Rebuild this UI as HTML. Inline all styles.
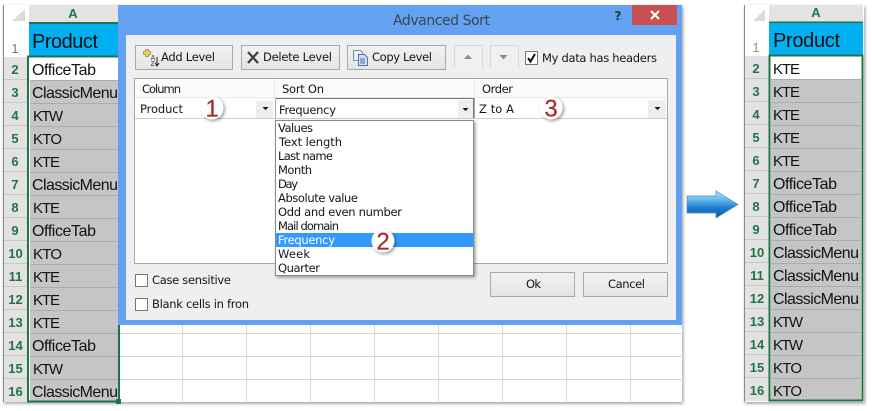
<!DOCTYPE html>
<html><head><meta charset="utf-8"><style>
html,body{margin:0;padding:0;background:#fff;width:872px;height:411px;overflow:hidden}
svg{display:block}
.c{font-family:"Liberation Sans",sans-serif;font-size:16px;fill:#111}
.k{font-size:15px}
.r{font-family:"Liberation Sans",sans-serif;font-size:13px;font-weight:bold;fill:#217346;text-anchor:middle}
.d{font-family:"DejaVu Sans",sans-serif;font-size:11.5px;fill:#14141f}
.n{font-family:"Liberation Sans",sans-serif;font-size:24px;fill:#a52a2a;stroke:#a52a2a;stroke-width:.2;text-anchor:middle}
</style></head><body>
<svg width="872" height="411" viewBox="0 0 872 411" xmlns="http://www.w3.org/2000/svg">
<defs>
<linearGradient id="ar" x1="0" y1="0" x2="0" y2="1"><stop offset="0" stop-color="#a8dcf8"/><stop offset=".3" stop-color="#6fbdee"/><stop offset=".6" stop-color="#1f7fd0"/><stop offset="1" stop-color="#0757a8"/></linearGradient>
<linearGradient id="bt" x1="0" y1="0" x2="0" y2="1"><stop offset="0" stop-color="#f2f2f2"/><stop offset="1" stop-color="#e4e4e4"/></linearGradient>
<filter id="sh" x="-30%" y="-30%" width="160%" height="160%"><feDropShadow dx="1.5" dy="1.5" stdDeviation="1.5" flood-color="#000" flood-opacity=".4"/></filter>
<filter id="sh2" x="-5%" y="-5%" width="110%" height="110%"><feDropShadow dx="1" dy="1.5" stdDeviation="1.5" flood-color="#000" flood-opacity=".4"/></filter>
</defs>

<!-- LEFT SHEET -->
<rect x="3" y="5" width="679" height="397" fill="#fff" filter="url(#sh2)"/>
<rect x="4" y="5" width="24" height="18" fill="#fff"/>
<path d="M25 9V21H12Z" fill="#dcdcdc"/>
<rect x="29" y="5" width="89" height="18" fill="#e4e4e4"/>
<text x="73" y="18" class="r">A</text>
<rect x="29" y="23" width="89" height="33" fill="#00b0f0"/>
<rect x="29" y="22" width="89" height="2" fill="#217346"/>
<rect x="4" y="57" width="24" height="345" fill="#e2e2e2"/>
<rect x="3" y="5" width="1" height="397" fill="#8a8a8a"/>
<rect x="30" y="80" width="88" height="322" fill="#c5c5c5"/>
<rect x="30" y="57" width="88" height="23" fill="#fff"/>
<path d="M30 80.500H118M30 103.500H118M30 126.500H118M30 149.500H118M30 172.500H118M30 195.500H118M30 218.500H118M30 241.500H118M30 264.500H118M30 287.500H118M30 310.500H118M30 333.500H118M30 356.500H118M30 379.500H118" stroke="#acacac" fill="none"/>
<path d="M4 79.500H28M4 102.500H28M4 125.500H28M4 148.500H28M4 171.500H28M4 194.500H28M4 217.500H28M4 240.500H28M4 263.500H28M4 286.500H28M4 309.500H28M4 332.500H28M4 355.500H28M4 378.500H28" stroke="#c8c8c8" fill="none"/>
<path d="M118 333.500H682M118 356.500H682M118 379.500H682M182.500 325V402M246.500 325V402M310.500 325V402M374.500 325V402M438.500 325V402M502.500 325V402M566.500 325V402M630.500 325V402" stroke="#d6d6d6" fill="none"/>
<rect x="28" y="56.500" width="91" height="345" fill="none" stroke="#217346" stroke-width="2"/>
<rect x="116" y="399" width="5" height="5" fill="#217346"/>
<text x="15" y="53" class="r" style="font-weight:normal;fill:#5a8a80">1</text>
<text x="15" y="74" class="r">2</text><text x="15" y="97" class="r">3</text><text x="15" y="120" class="r">4</text><text x="15" y="143" class="r">5</text><text x="15" y="166" class="r">6</text><text x="15" y="189" class="r">7</text><text x="15" y="212" class="r">8</text><text x="15" y="235" class="r">9</text><text x="15.500" y="258" class="r">10</text><text x="15.500" y="281" class="r">11</text><text x="15.500" y="304" class="r">12</text><text x="15.500" y="327" class="r">13</text><text x="15.500" y="350" class="r">14</text><text x="15.500" y="373" class="r">15</text><text x="15.500" y="396" class="r">16</text>
<text x="32" y="48" class="c" style="font-size:20px" textLength="66">Product</text>
<text x="32" y="75" class="c" textLength="64">OfficeTab</text>
<text x="32" y="98" class="c" textLength="86">ClassicMenu</text>
<text x="33" y="121" class="c k" textLength="30">KTW</text>
<text x="33" y="144" class="c k" textLength="29">KTO</text>
<text x="33" y="167" class="c k" textLength="27">KTE</text>
<text x="32" y="190" class="c" textLength="86">ClassicMenu</text>
<text x="33" y="213" class="c k" textLength="27">KTE</text>
<text x="32" y="236" class="c" textLength="64">OfficeTab</text>
<text x="33" y="259" class="c k" textLength="29">KTO</text>
<text x="33" y="282" class="c k" textLength="27">KTE</text>
<text x="33" y="305" class="c k" textLength="27">KTE</text>
<text x="33" y="328" class="c k" textLength="27">KTE</text>
<text x="32" y="351" class="c" textLength="64">OfficeTab</text>
<text x="33" y="374" class="c k" textLength="30">KTW</text>
<text x="32" y="397" class="c" textLength="86">ClassicMenu</text>

<!-- DIALOG -->
<rect x="118" y="5" width="564" height="320" fill="#65a1f2"/>
<rect x="126" y="35" width="550" height="285" fill="#efefef"/>
<rect x="632" y="5" width="45" height="20" fill="#c75050"/>
<path d="M651 11L659 19M659 11L651 19" stroke="#fff" stroke-width="2"/>
<text x="618" y="20" style="font-family:'DejaVu Sans',sans-serif;font-size:12px;font-weight:bold;fill:#333" text-anchor="middle">?</text>
<text x="393" y="25" style="font-family:'DejaVu Sans',sans-serif;font-size:14px;fill:#3c4450" textLength="97">Advanced Sort</text>

<!-- toolbar -->
<rect x="135.500" y="45.500" width="97" height="24" fill="url(#bt)" stroke="#a8a8a8"/>
<rect x="241.500" y="45.500" width="98" height="24" fill="url(#bt)" stroke="#a8a8a8"/>
<rect x="347.500" y="45.500" width="98" height="24" fill="url(#bt)" stroke="#a8a8a8"/>
<path d="M454.500 68V45.500H482.500V68M490.500 68V45.500H518.500V68" fill="#f0f0f0" stroke="#d8d8d8"/>
<path d="M464 59L468 54.500L472 59Z" fill="#8a8a8a"/>
<path d="M499.500 55H507.500L503.500 59.500Z" fill="#8a8a8a"/>
<!-- add icon -->
<path d="M145.500 49.500h3v2h2v3h-2v2h-3v-2h-2v-3h2Z" fill="#f2d25a" stroke="#9a8a3a" stroke-width=".8"/>
<text x="150.500" y="60" style="font-family:'Liberation Sans',sans-serif;font-size:7px;font-weight:bold;fill:#4a7ab0">A</text>
<text x="150.500" y="66" style="font-family:'Liberation Sans',sans-serif;font-size:7px;font-weight:bold;fill:#a05050">Z</text>
<path d="M157 57V65M155 63L157 66L159 63" stroke="#222" fill="none"/>
<!-- delete icon -->
<path d="M248 52L258 63M258 52L248 63" stroke="#3c3c3c" stroke-width="2.200"/>
<!-- copy icon -->
<path d="M353.500 50.500h7l2 2v8h-9Z" fill="#e8f0fa" stroke="#6f8fb8"/>
<path d="M358.500 54.500h6l3 3v8h-9Z" fill="#cfe0f5" stroke="#4f77aa"/>
<path d="M360 59h5M360 61h5M360 63h5" stroke="#4f77aa"/>
<text x="161" y="61" class="d" textLength="54">Add Level</text>
<text x="263" y="61" class="d" textLength="69">Delete Level</text>
<text x="372" y="61" class="d" textLength="60">Copy Level</text>
<rect x="525.500" y="51.500" width="12" height="13" fill="#fff" stroke="#777"/>
<path d="M528 58L530.500 61.500L535 54" stroke="#111" stroke-width="2" fill="none"/>
<text x="542" y="62" class="d" textLength="115">My data has headers</text>

<!-- table -->
<rect x="134.500" y="78.500" width="533" height="185" fill="#fff" stroke="#a8a8a8"/>
<rect x="135" y="79" width="532" height="18" fill="#fbfbfc"/>
<path d="M135 97.500H667" stroke="#e4e8f0"/>
<path d="M274.500 79V97M474.500 79V97" stroke="#e4e8f0"/>
<text x="142" y="93" class="d" textLength="39">Column</text>
<text x="282" y="93" class="d" textLength="42">Sort On</text>
<text x="482" y="93" class="d" textLength="31">Order</text>
<path d="M135 118.500H667" stroke="#cfcfcf"/>
<path d="M275 98.500H473.500V118" stroke="#777" fill="none"/>
<path d="M275.500 98V119M474.500 98V118" stroke="#a8a8a8"/>
<rect x="256" y="101" width="17" height="17" fill="#eeeeee"/>
<rect x="458" y="100" width="15" height="18" fill="#eeeeee"/>
<rect x="648" y="100" width="18" height="18" fill="#eeeeee"/>
<path d="M262.500 107H268.500L265.500 110Z M462.500 108H468.500L465.500 111Z M654.500 107H660.500L657.500 110Z" fill="#111"/>
<text x="140" y="113" class="d" textLength="43">Product</text>
<text x="279" y="114" class="d" textLength="57">Frequency</text>
<text x="479" y="113" class="d" textLength="35">Z to A</text>

<!-- bottom controls -->
<rect x="135.500" y="274.500" width="12" height="12" fill="#fff" stroke="#777"/>
<rect x="135.500" y="298.500" width="12" height="12" fill="#fff" stroke="#777"/>
<text x="152" y="284" class="d" textLength="79">Case sensitive</text>
<text x="152" y="308" class="d" textLength="97">Blank cells in fron</text>
<rect x="490.500" y="272.500" width="84" height="24" fill="url(#bt)" stroke="#a8a8a8"/>
<rect x="583.500" y="272.500" width="84" height="24" fill="url(#bt)" stroke="#a8a8a8"/>
<text x="526" y="288" class="d" textLength="15">Ok</text>
<text x="608" y="288" class="d" textLength="37">Cancel</text>

<!-- dropdown -->
<rect x="275.500" y="120.500" width="198" height="155" fill="#fff" stroke="#8a8a8a" filter="url(#sh)"/>
<rect x="276" y="233" width="197" height="14" fill="#3399ff"/>
<text x="278" y="132" class="d" textLength="35">Values</text>
<text x="279" y="146" class="d" textLength="63">Text length</text>
<text x="278" y="160" class="d" textLength="55">Last name</text>
<text x="278" y="174" class="d" textLength="34">Month</text>
<text x="278" y="188" class="d" textLength="20">Day</text>
<text x="278" y="202" class="d" textLength="80">Absolute value</text>
<text x="278" y="216" class="d" textLength="124">Odd and even number</text>
<text x="278" y="230" class="d" textLength="61">Mail domain</text>
<text x="278" y="244" class="d" style="fill:#fff" textLength="57">Frequency</text>
<text x="278" y="258" class="d" textLength="32">Week</text>
<text x="278" y="272" class="d" textLength="42">Quarter</text>

<!-- badges -->
<circle cx="212" cy="108" r="11.500" fill="#fff" filter="url(#sh)"/><text x="212" y="116.500" class="n">1</text>
<circle cx="383" cy="241" r="11.500" fill="#fff" filter="url(#sh)"/><text x="383" y="249.500" class="n">2</text>
<circle cx="551" cy="108" r="11.500" fill="#fff" filter="url(#sh)"/><text x="551" y="116.500" class="n">3</text>

<!-- ARROW -->
<path d="M687 196H716V191L738 204.500L716 218V213H687Z" fill="url(#ar)" stroke="#4a8fd0" stroke-width=".7"/>

<!-- RIGHT SHEET -->
<rect x="744" y="5" width="120" height="397" fill="#fff" filter="url(#sh2)"/>
<rect x="744" y="5" width="1" height="397" fill="#8a8a8a"/>
<path d="M765 9V21H753Z" fill="#dcdcdc"/>
<rect x="769" y="5" width="94" height="17" fill="#e4e4e4"/>
<text x="816" y="17" class="r">A</text>
<rect x="769" y="22" width="94" height="33" fill="#00b0f0"/>
<rect x="769" y="21.500" width="94" height="1.500" fill="#217346"/>
<rect x="745" y="56" width="24" height="345" fill="#e2e2e2"/>
<rect x="771" y="79" width="90" height="321" fill="#c5c5c5"/>
<path d="M771 79.500H861M771 102.500H861M771 125.500H861M771 148.500H861M771 171.500H861M771 194.500H861M771 217.500H861M771 240.500H861M771 263.500H861M771 286.500H861M771 309.500H861M771 332.500H861M771 355.500H861M771 378.500H861" stroke="#acacac" fill="none"/>
<path d="M745 78.500H769M745 101.500H769M745 124.500H769M745 147.500H769M745 170.500H769M745 193.500H769M745 216.500H769M745 239.500H769M745 262.500H769M745 285.500H769M745 308.500H769M745 331.500H769M745 354.500H769M745 377.500H769" stroke="#c8c8c8" fill="none"/>
<rect x="769.500" y="55.500" width="93" height="345" fill="none" stroke="#217346" stroke-width="2"/>
<text x="756" y="52" class="r" style="font-weight:normal;fill:#b08d50">1</text>
<text x="756" y="73" class="r">2</text><text x="756" y="96" class="r">3</text><text x="756" y="119" class="r">4</text><text x="756" y="142" class="r">5</text><text x="756" y="165" class="r">6</text><text x="756" y="188" class="r">7</text><text x="756" y="211" class="r">8</text><text x="756" y="234" class="r">9</text><text x="757" y="257" class="r">10</text><text x="757" y="280" class="r">11</text><text x="757" y="303" class="r">12</text><text x="757" y="326" class="r">13</text><text x="757" y="349" class="r">14</text><text x="757" y="372" class="r">15</text><text x="757" y="395" class="r">16</text>
<text x="773" y="47" class="c" style="font-size:20px" textLength="67">Product</text>
<text x="773" y="74" class="c k" textLength="27">KTE</text>
<text x="773" y="97" class="c k" textLength="27">KTE</text>
<text x="773" y="120" class="c k" textLength="27">KTE</text>
<text x="773" y="143" class="c k" textLength="27">KTE</text>
<text x="773" y="166" class="c k" textLength="27">KTE</text>
<text x="773" y="189" class="c" textLength="64">OfficeTab</text>
<text x="773" y="212" class="c" textLength="64">OfficeTab</text>
<text x="773" y="235" class="c" textLength="64">OfficeTab</text>
<text x="773" y="258" class="c" textLength="86">ClassicMenu</text>
<text x="773" y="281" class="c" textLength="86">ClassicMenu</text>
<text x="773" y="304" class="c" textLength="86">ClassicMenu</text>
<text x="773" y="327" class="c k" textLength="30">KTW</text>
<text x="773" y="350" class="c k" textLength="30">KTW</text>
<text x="773" y="373" class="c k" textLength="29">KTO</text>
<text x="773" y="396" class="c k" textLength="29">KTO</text>
</svg>
</body></html>
